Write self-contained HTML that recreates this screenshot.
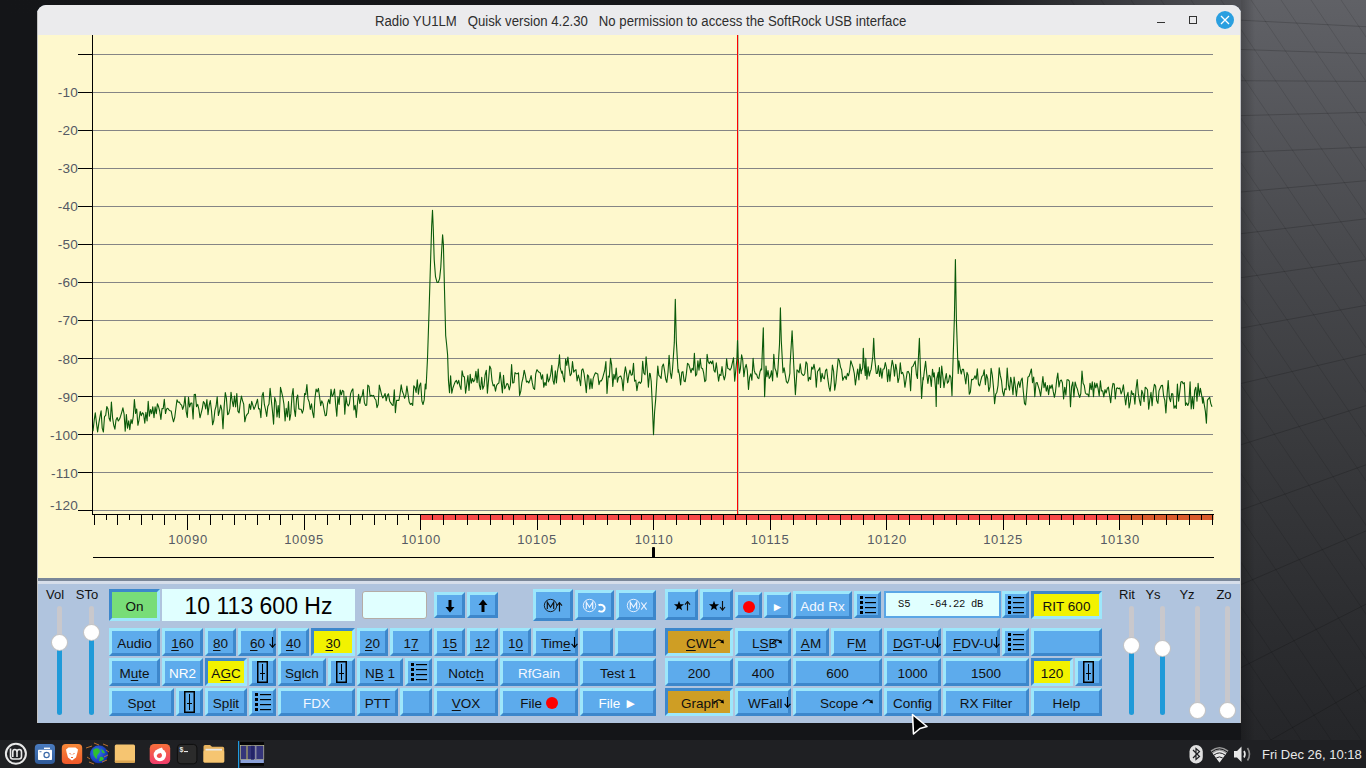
<!DOCTYPE html><html><head><meta charset="utf-8"><style>
*{margin:0;padding:0;box-sizing:content-box}
html,body{width:1366px;height:768px;overflow:hidden;background:#141518;font-family:"Liberation Sans",sans-serif}
.a{position:absolute}
.b{position:absolute;border-style:solid;text-align:center;white-space:nowrap;overflow:hidden}
.u{text-decoration:underline;text-underline-offset:2px;text-decoration-thickness:1px}
.yl{position:absolute;width:40px;text-align:right;font-size:13.6px;color:#555a64;line-height:14px;letter-spacing:0.2px}
.xl{position:absolute;width:60px;text-align:center;font-size:13px;color:#555a64;line-height:14px;letter-spacing:0.7px}
.sl{position:absolute;font-size:13px;color:#111;line-height:14px;text-align:center;width:30px}
</style></head><body>
<div class="a" style="left:0;top:0;width:1366px;height:16px;background:linear-gradient(90deg,#141518 0,#17181b 950px,#4a4b50 1200px,#5f6065 1366px)"></div><div class="a" style="left:1241px;top:0;width:125px;height:740px;background:linear-gradient(180deg,#606166 0%,#5c5d62 6%,#48494d 34%,#38393c 61%,#2c2d30 84%,#252629 100%)"></div><svg class="a" style="left:0;top:0" width="1366" height="740"><defs><clipPath id="dpc"><rect x="1241" y="0" width="125" height="740"/><rect x="1050" y="0" width="191" height="6"/></clipPath><linearGradient id="dsh" x1="0" y1="0" x2="1" y2="0"><stop offset="0" stop-color="#000" stop-opacity="0.22"/><stop offset="1" stop-color="#000" stop-opacity="0"/></linearGradient></defs><g clip-path="url(#dpc)"><line x1="1241" y1="20.2" x2="1366" y2="26.7" stroke="#000" stroke-opacity="0.17" stroke-width="1"/><line x1="1241" y1="49.5" x2="1366" y2="53.7" stroke="#000" stroke-opacity="0.17" stroke-width="1"/><line x1="1241" y1="80.7" x2="1366" y2="81.4" stroke="#000" stroke-opacity="0.17" stroke-width="1"/><line x1="1241" y1="115.6" x2="1366" y2="112.3" stroke="#000" stroke-opacity="0.17" stroke-width="1"/><line x1="1241" y1="152.3" x2="1366" y2="147.1" stroke="#000" stroke-opacity="0.17" stroke-width="1"/><line x1="1241" y1="192" x2="1366" y2="180.7" stroke="#000" stroke-opacity="0.17" stroke-width="1"/><line x1="1241" y1="233.7" x2="1366" y2="218.8" stroke="#000" stroke-opacity="0.17" stroke-width="1"/><line x1="1241" y1="277.7" x2="1366" y2="259.8" stroke="#000" stroke-opacity="0.17" stroke-width="1"/><line x1="1241" y1="328.1" x2="1366" y2="305.3" stroke="#000" stroke-opacity="0.17" stroke-width="1"/><line x1="1241" y1="383.5" x2="1366" y2="354.2" stroke="#000" stroke-opacity="0.17" stroke-width="1"/><line x1="1241" y1="444.7" x2="1366" y2="405.6" stroke="#000" stroke-opacity="0.17" stroke-width="1"/><line x1="1241" y1="510" x2="1366" y2="464.8" stroke="#000" stroke-opacity="0.17" stroke-width="1"/><line x1="1241" y1="584.6" x2="1366" y2="530.9" stroke="#000" stroke-opacity="0.17" stroke-width="1"/><line x1="1241" y1="667.6" x2="1366" y2="604.2" stroke="#000" stroke-opacity="0.17" stroke-width="1"/><line x1="1241" y1="757" x2="1366" y2="685.5" stroke="#000" stroke-opacity="0.17" stroke-width="1"/><line x1="1241" y1="850" x2="1366" y2="770" stroke="#000" stroke-opacity="0.17" stroke-width="1"/><line x1="351" y1="0" x2="851" y2="740" stroke="#000" stroke-opacity="0.11" stroke-width="1"/><line x1="381" y1="0" x2="881" y2="740" stroke="#000" stroke-opacity="0.11" stroke-width="1"/><line x1="411" y1="0" x2="911" y2="740" stroke="#000" stroke-opacity="0.11" stroke-width="1"/><line x1="441" y1="0" x2="941" y2="740" stroke="#000" stroke-opacity="0.11" stroke-width="1"/><line x1="471" y1="0" x2="971" y2="740" stroke="#000" stroke-opacity="0.11" stroke-width="1"/><line x1="501" y1="0" x2="1001" y2="740" stroke="#000" stroke-opacity="0.11" stroke-width="1"/><line x1="531" y1="0" x2="1031" y2="740" stroke="#000" stroke-opacity="0.11" stroke-width="1"/><line x1="561" y1="0" x2="1061" y2="740" stroke="#000" stroke-opacity="0.11" stroke-width="1"/><line x1="591" y1="0" x2="1091" y2="740" stroke="#000" stroke-opacity="0.11" stroke-width="1"/><line x1="621" y1="0" x2="1121" y2="740" stroke="#000" stroke-opacity="0.11" stroke-width="1"/><line x1="651" y1="0" x2="1151" y2="740" stroke="#000" stroke-opacity="0.11" stroke-width="1"/><line x1="681" y1="0" x2="1181" y2="740" stroke="#000" stroke-opacity="0.11" stroke-width="1"/><line x1="711" y1="0" x2="1211" y2="740" stroke="#000" stroke-opacity="0.11" stroke-width="1"/><line x1="741" y1="0" x2="1241" y2="740" stroke="#000" stroke-opacity="0.11" stroke-width="1"/><line x1="771" y1="0" x2="1271" y2="740" stroke="#000" stroke-opacity="0.11" stroke-width="1"/><line x1="801" y1="0" x2="1301" y2="740" stroke="#000" stroke-opacity="0.11" stroke-width="1"/><line x1="831" y1="0" x2="1331" y2="740" stroke="#000" stroke-opacity="0.11" stroke-width="1"/><line x1="861" y1="0" x2="1361" y2="740" stroke="#000" stroke-opacity="0.11" stroke-width="1"/><line x1="891" y1="0" x2="1391" y2="740" stroke="#000" stroke-opacity="0.11" stroke-width="1"/><line x1="921" y1="0" x2="1421" y2="740" stroke="#000" stroke-opacity="0.11" stroke-width="1"/><line x1="951" y1="0" x2="1451" y2="740" stroke="#000" stroke-opacity="0.11" stroke-width="1"/><line x1="981" y1="0" x2="1481" y2="740" stroke="#000" stroke-opacity="0.11" stroke-width="1"/><line x1="1011" y1="0" x2="1511" y2="740" stroke="#000" stroke-opacity="0.11" stroke-width="1"/><line x1="1041" y1="0" x2="1541" y2="740" stroke="#000" stroke-opacity="0.11" stroke-width="1"/><line x1="1071" y1="0" x2="1571" y2="740" stroke="#000" stroke-opacity="0.11" stroke-width="1"/><line x1="1101" y1="0" x2="1601" y2="740" stroke="#000" stroke-opacity="0.11" stroke-width="1"/><line x1="1131" y1="0" x2="1631" y2="740" stroke="#000" stroke-opacity="0.11" stroke-width="1"/><line x1="1161" y1="0" x2="1661" y2="740" stroke="#000" stroke-opacity="0.11" stroke-width="1"/><line x1="1191" y1="0" x2="1691" y2="740" stroke="#000" stroke-opacity="0.11" stroke-width="1"/><line x1="1221" y1="0" x2="1721" y2="740" stroke="#000" stroke-opacity="0.11" stroke-width="1"/><line x1="1251" y1="0" x2="1751" y2="740" stroke="#000" stroke-opacity="0.11" stroke-width="1"/><line x1="1281" y1="0" x2="1781" y2="740" stroke="#000" stroke-opacity="0.11" stroke-width="1"/><line x1="1311" y1="0" x2="1811" y2="740" stroke="#000" stroke-opacity="0.11" stroke-width="1"/><line x1="1341" y1="0" x2="1841" y2="740" stroke="#000" stroke-opacity="0.11" stroke-width="1"/><line x1="1371" y1="0" x2="1871" y2="740" stroke="#000" stroke-opacity="0.11" stroke-width="1"/><line x1="1401" y1="0" x2="1901" y2="740" stroke="#000" stroke-opacity="0.11" stroke-width="1"/></g><rect x="1241" y="0" width="14" height="740" fill="url(#dsh)"/></svg><div class="a" style="left:37px;top:5px;width:1204px;height:718px;background:#b0c4de;border-radius:9px 9px 0 0;overflow:hidden"><div class="a" style="left:0;top:0;width:1204px;height:30px;background:#ebebed"></div><div class="a" style="left:0;top:30px;width:1204px;height:543px;background:#fef8cd"></div><div class="a" style="left:0;top:573px;width:1204px;height:3px;background:#7a8798"></div><div class="a" style="left:0;top:576px;width:1204px;height:3px;background:#d6deea"></div></div><div class="a" style="left:37px;top:12px;width:1px;height:711px;background:#c4c4c4"></div><div class="a" style="left:1240px;top:12px;width:1px;height:711px;background:#c4c4c4"></div><div class="a" style="left:375px;top:13px;width:600px;font-size:14px;color:#2e2e2e;white-space:pre;line-height:16px;transform:scaleX(0.941);transform-origin:0 0">Radio YU1LM   Quisk version 4.2.30   No permission to access the SoftRock USB interface</div><div class="a" style="left:1157px;top:22px;width:8px;height:1px;background:#333"></div><div class="a" style="left:1189px;top:16px;width:6px;height:6px;border:1.5px solid #333"></div><div class="a" style="left:1216px;top:11px;width:18px;height:18px;border-radius:50%;background:#2a9fe0"></div><svg class="a" style="left:1216px;top:11px" width="18" height="18"><path d="M5 5L13 13M13 5L5 13" stroke="#fff" stroke-width="1.25"/></svg><svg class="a" style="left:0;top:0" width="1366" height="768"><line x1="93" y1="54.5" x2="1213" y2="54.5" stroke="#858585" stroke-width="1"/><line x1="78" y1="54.5" x2="93" y2="54.5" stroke="#000" stroke-width="1"/><line x1="93" y1="92.5" x2="1213" y2="92.5" stroke="#858585" stroke-width="1"/><line x1="78" y1="92.5" x2="93" y2="92.5" stroke="#000" stroke-width="1"/><line x1="93" y1="130.5" x2="1213" y2="130.5" stroke="#858585" stroke-width="1"/><line x1="78" y1="130.5" x2="93" y2="130.5" stroke="#000" stroke-width="1"/><line x1="93" y1="168.5" x2="1213" y2="168.5" stroke="#858585" stroke-width="1"/><line x1="78" y1="168.5" x2="93" y2="168.5" stroke="#000" stroke-width="1"/><line x1="93" y1="206.5" x2="1213" y2="206.5" stroke="#858585" stroke-width="1"/><line x1="78" y1="206.5" x2="93" y2="206.5" stroke="#000" stroke-width="1"/><line x1="93" y1="244.5" x2="1213" y2="244.5" stroke="#858585" stroke-width="1"/><line x1="78" y1="244.5" x2="93" y2="244.5" stroke="#000" stroke-width="1"/><line x1="93" y1="282.5" x2="1213" y2="282.5" stroke="#858585" stroke-width="1"/><line x1="78" y1="282.5" x2="93" y2="282.5" stroke="#000" stroke-width="1"/><line x1="93" y1="320.5" x2="1213" y2="320.5" stroke="#858585" stroke-width="1"/><line x1="78" y1="320.5" x2="93" y2="320.5" stroke="#000" stroke-width="1"/><line x1="93" y1="358.5" x2="1213" y2="358.5" stroke="#858585" stroke-width="1"/><line x1="78" y1="358.5" x2="93" y2="358.5" stroke="#000" stroke-width="1"/><line x1="93" y1="396.5" x2="1213" y2="396.5" stroke="#858585" stroke-width="1"/><line x1="78" y1="396.5" x2="93" y2="396.5" stroke="#000" stroke-width="1"/><line x1="93" y1="434.5" x2="1213" y2="434.5" stroke="#858585" stroke-width="1"/><line x1="78" y1="434.5" x2="93" y2="434.5" stroke="#000" stroke-width="1"/><line x1="93" y1="472.5" x2="1213" y2="472.5" stroke="#858585" stroke-width="1"/><line x1="78" y1="472.5" x2="93" y2="472.5" stroke="#000" stroke-width="1"/><line x1="93" y1="510.5" x2="1213" y2="510.5" stroke="#858585" stroke-width="1"/><line x1="78" y1="510.5" x2="93" y2="510.5" stroke="#000" stroke-width="1"/><line x1="92.5" y1="35" x2="92.5" y2="515" stroke="#000" stroke-width="1"/><rect x="420.6" y="515" width="699.0" height="5" fill="#f84848"/><rect x="1119.6" y="515" width="93.9" height="5" fill="#d85a2a"/><line x1="93" y1="514.5" x2="1214" y2="514.5" stroke="#000" stroke-width="1"/><line x1="94.5" y1="515" x2="94.5" y2="525" stroke="#000" stroke-width="1"/><line x1="106.5" y1="515" x2="106.5" y2="520" stroke="#000" stroke-width="1"/><line x1="117.5" y1="515" x2="117.5" y2="525" stroke="#000" stroke-width="1"/><line x1="129.5" y1="515" x2="129.5" y2="520" stroke="#000" stroke-width="1"/><line x1="141.5" y1="515" x2="141.5" y2="525" stroke="#000" stroke-width="1"/><line x1="152.5" y1="515" x2="152.5" y2="520" stroke="#000" stroke-width="1"/><line x1="164.5" y1="515" x2="164.5" y2="525" stroke="#000" stroke-width="1"/><line x1="175.5" y1="515" x2="175.5" y2="520" stroke="#000" stroke-width="1"/><line x1="187.5" y1="515" x2="187.5" y2="530" stroke="#000" stroke-width="1"/><line x1="199.5" y1="515" x2="199.5" y2="520" stroke="#000" stroke-width="1"/><line x1="210.5" y1="515" x2="210.5" y2="525" stroke="#000" stroke-width="1"/><line x1="222.5" y1="515" x2="222.5" y2="520" stroke="#000" stroke-width="1"/><line x1="234.5" y1="515" x2="234.5" y2="525" stroke="#000" stroke-width="1"/><line x1="245.5" y1="515" x2="245.5" y2="520" stroke="#000" stroke-width="1"/><line x1="257.5" y1="515" x2="257.5" y2="525" stroke="#000" stroke-width="1"/><line x1="269.5" y1="515" x2="269.5" y2="520" stroke="#000" stroke-width="1"/><line x1="280.5" y1="515" x2="280.5" y2="525" stroke="#000" stroke-width="1"/><line x1="292.5" y1="515" x2="292.5" y2="520" stroke="#000" stroke-width="1"/><line x1="304.5" y1="515" x2="304.5" y2="530" stroke="#000" stroke-width="1"/><line x1="315.5" y1="515" x2="315.5" y2="520" stroke="#000" stroke-width="1"/><line x1="327.5" y1="515" x2="327.5" y2="525" stroke="#000" stroke-width="1"/><line x1="339.5" y1="515" x2="339.5" y2="520" stroke="#000" stroke-width="1"/><line x1="350.5" y1="515" x2="350.5" y2="525" stroke="#000" stroke-width="1"/><line x1="362.5" y1="515" x2="362.5" y2="520" stroke="#000" stroke-width="1"/><line x1="374.5" y1="515" x2="374.5" y2="525" stroke="#000" stroke-width="1"/><line x1="385.5" y1="515" x2="385.5" y2="520" stroke="#000" stroke-width="1"/><line x1="397.5" y1="515" x2="397.5" y2="525" stroke="#000" stroke-width="1"/><line x1="408.5" y1="515" x2="408.5" y2="520" stroke="#000" stroke-width="1"/><line x1="420.5" y1="515" x2="420.5" y2="530" stroke="#000" stroke-width="1"/><line x1="432.5" y1="515" x2="432.5" y2="520" stroke="#000" stroke-width="1"/><line x1="443.5" y1="515" x2="443.5" y2="525" stroke="#000" stroke-width="1"/><line x1="455.5" y1="515" x2="455.5" y2="520" stroke="#000" stroke-width="1"/><line x1="467.5" y1="515" x2="467.5" y2="525" stroke="#000" stroke-width="1"/><line x1="478.5" y1="515" x2="478.5" y2="520" stroke="#000" stroke-width="1"/><line x1="490.5" y1="515" x2="490.5" y2="525" stroke="#000" stroke-width="1"/><line x1="502.5" y1="515" x2="502.5" y2="520" stroke="#000" stroke-width="1"/><line x1="513.5" y1="515" x2="513.5" y2="525" stroke="#000" stroke-width="1"/><line x1="525.5" y1="515" x2="525.5" y2="520" stroke="#000" stroke-width="1"/><line x1="537.5" y1="515" x2="537.5" y2="530" stroke="#000" stroke-width="1"/><line x1="548.5" y1="515" x2="548.5" y2="520" stroke="#000" stroke-width="1"/><line x1="560.5" y1="515" x2="560.5" y2="525" stroke="#000" stroke-width="1"/><line x1="572.5" y1="515" x2="572.5" y2="520" stroke="#000" stroke-width="1"/><line x1="583.5" y1="515" x2="583.5" y2="525" stroke="#000" stroke-width="1"/><line x1="595.5" y1="515" x2="595.5" y2="520" stroke="#000" stroke-width="1"/><line x1="607.5" y1="515" x2="607.5" y2="525" stroke="#000" stroke-width="1"/><line x1="618.5" y1="515" x2="618.5" y2="520" stroke="#000" stroke-width="1"/><line x1="630.5" y1="515" x2="630.5" y2="525" stroke="#000" stroke-width="1"/><line x1="641.5" y1="515" x2="641.5" y2="520" stroke="#000" stroke-width="1"/><line x1="653.5" y1="515" x2="653.5" y2="530" stroke="#000" stroke-width="1"/><line x1="665.5" y1="515" x2="665.5" y2="520" stroke="#000" stroke-width="1"/><line x1="676.5" y1="515" x2="676.5" y2="525" stroke="#000" stroke-width="1"/><line x1="688.5" y1="515" x2="688.5" y2="520" stroke="#000" stroke-width="1"/><line x1="700.5" y1="515" x2="700.5" y2="525" stroke="#000" stroke-width="1"/><line x1="711.5" y1="515" x2="711.5" y2="520" stroke="#000" stroke-width="1"/><line x1="723.5" y1="515" x2="723.5" y2="525" stroke="#000" stroke-width="1"/><line x1="735.5" y1="515" x2="735.5" y2="520" stroke="#000" stroke-width="1"/><line x1="746.5" y1="515" x2="746.5" y2="525" stroke="#000" stroke-width="1"/><line x1="758.5" y1="515" x2="758.5" y2="520" stroke="#000" stroke-width="1"/><line x1="770.5" y1="515" x2="770.5" y2="530" stroke="#000" stroke-width="1"/><line x1="781.5" y1="515" x2="781.5" y2="520" stroke="#000" stroke-width="1"/><line x1="793.5" y1="515" x2="793.5" y2="525" stroke="#000" stroke-width="1"/><line x1="805.5" y1="515" x2="805.5" y2="520" stroke="#000" stroke-width="1"/><line x1="816.5" y1="515" x2="816.5" y2="525" stroke="#000" stroke-width="1"/><line x1="828.5" y1="515" x2="828.5" y2="520" stroke="#000" stroke-width="1"/><line x1="840.5" y1="515" x2="840.5" y2="525" stroke="#000" stroke-width="1"/><line x1="851.5" y1="515" x2="851.5" y2="520" stroke="#000" stroke-width="1"/><line x1="863.5" y1="515" x2="863.5" y2="525" stroke="#000" stroke-width="1"/><line x1="874.5" y1="515" x2="874.5" y2="520" stroke="#000" stroke-width="1"/><line x1="886.5" y1="515" x2="886.5" y2="530" stroke="#000" stroke-width="1"/><line x1="898.5" y1="515" x2="898.5" y2="520" stroke="#000" stroke-width="1"/><line x1="909.5" y1="515" x2="909.5" y2="525" stroke="#000" stroke-width="1"/><line x1="921.5" y1="515" x2="921.5" y2="520" stroke="#000" stroke-width="1"/><line x1="933.5" y1="515" x2="933.5" y2="525" stroke="#000" stroke-width="1"/><line x1="944.5" y1="515" x2="944.5" y2="520" stroke="#000" stroke-width="1"/><line x1="956.5" y1="515" x2="956.5" y2="525" stroke="#000" stroke-width="1"/><line x1="968.5" y1="515" x2="968.5" y2="520" stroke="#000" stroke-width="1"/><line x1="979.5" y1="515" x2="979.5" y2="525" stroke="#000" stroke-width="1"/><line x1="991.5" y1="515" x2="991.5" y2="520" stroke="#000" stroke-width="1"/><line x1="1003.5" y1="515" x2="1003.5" y2="530" stroke="#000" stroke-width="1"/><line x1="1014.5" y1="515" x2="1014.5" y2="520" stroke="#000" stroke-width="1"/><line x1="1026.5" y1="515" x2="1026.5" y2="525" stroke="#000" stroke-width="1"/><line x1="1038.5" y1="515" x2="1038.5" y2="520" stroke="#000" stroke-width="1"/><line x1="1049.5" y1="515" x2="1049.5" y2="525" stroke="#000" stroke-width="1"/><line x1="1061.5" y1="515" x2="1061.5" y2="520" stroke="#000" stroke-width="1"/><line x1="1073.5" y1="515" x2="1073.5" y2="525" stroke="#000" stroke-width="1"/><line x1="1084.5" y1="515" x2="1084.5" y2="520" stroke="#000" stroke-width="1"/><line x1="1096.5" y1="515" x2="1096.5" y2="525" stroke="#000" stroke-width="1"/><line x1="1107.5" y1="515" x2="1107.5" y2="520" stroke="#000" stroke-width="1"/><line x1="1119.5" y1="515" x2="1119.5" y2="530" stroke="#000" stroke-width="1"/><line x1="1131.5" y1="515" x2="1131.5" y2="520" stroke="#000" stroke-width="1"/><line x1="1142.5" y1="515" x2="1142.5" y2="525" stroke="#000" stroke-width="1"/><line x1="1154.5" y1="515" x2="1154.5" y2="520" stroke="#000" stroke-width="1"/><line x1="1166.5" y1="515" x2="1166.5" y2="525" stroke="#000" stroke-width="1"/><line x1="1177.5" y1="515" x2="1177.5" y2="520" stroke="#000" stroke-width="1"/><line x1="1189.5" y1="515" x2="1189.5" y2="525" stroke="#000" stroke-width="1"/><line x1="1201.5" y1="515" x2="1201.5" y2="520" stroke="#000" stroke-width="1"/><line x1="1212.5" y1="515" x2="1212.5" y2="525" stroke="#000" stroke-width="1"/><line x1="93" y1="557.5" x2="1214" y2="557.5" stroke="#000" stroke-width="1"/><rect x="652" y="547" width="3" height="11" rx="1" fill="#000"/><rect x="738" y="35" width="1" height="479" fill="#c6ccae"/><rect x="737" y="35" width="1" height="479" fill="#ff0000"/><polyline points="93.0,431.1 94.2,420.1 95.3,412.9 96.5,423.4 97.6,431.9 98.8,423.4 99.9,417.2 101.1,410.9 102.2,428.1 103.4,432.0 104.5,416.7 105.7,415.4 106.8,406.6 108.0,409.1 109.1,418.2 110.3,421.3 111.4,402.1 112.6,417.9 113.7,425.0 114.9,429.1 116.0,420.0 117.2,417.6 118.3,421.0 119.5,419.3 120.6,416.2 121.8,412.1 122.9,407.9 124.1,414.1 125.2,431.2 126.4,414.6 127.5,428.1 128.7,420.8 129.8,429.6 131.0,419.5 132.1,423.6 133.3,416.3 134.4,399.5 135.6,413.4 136.7,409.0 137.9,425.3 139.0,420.2 140.2,411.5 141.3,415.6 142.5,412.7 143.6,414.1 144.8,423.2 145.9,412.3 147.1,421.0 148.2,401.2 149.4,416.2 150.5,409.5 151.7,413.6 152.8,406.7 154.0,417.6 155.1,406.9 156.3,413.6 157.4,403.8 158.6,406.8 159.7,411.2 160.9,419.4 162.0,408.6 163.2,408.7 164.3,399.3 165.5,413.5 166.6,408.9 167.8,408.3 168.9,409.9 170.1,410.7 171.2,411.1 172.4,417.3 173.5,421.8 174.7,417.7 175.8,409.0 177.0,399.8 178.1,402.2 179.3,402.0 180.4,404.1 181.6,405.1 182.7,409.4 183.9,405.5 185.0,396.6 186.2,411.6 187.3,417.4 188.5,397.4 189.6,407.0 190.8,403.1 191.9,403.0 193.1,419.0 194.2,394.5 195.4,394.4 196.5,406.6 197.7,404.4 198.8,408.9 200.0,417.8 201.1,413.4 202.3,408.5 203.4,401.6 204.6,403.4 205.7,408.9 206.9,399.6 208.0,414.6 209.2,405.1 210.3,400.6 211.5,410.8 212.6,424.8 213.8,420.5 214.9,410.4 216.1,406.0 217.2,396.9 218.4,415.5 219.5,411.1 220.7,405.0 221.8,410.1 223.0,428.8 224.1,407.1 225.3,392.5 226.4,398.1 227.6,414.6 228.7,413.7 229.9,408.5 231.0,392.2 232.2,400.9 233.3,406.6 234.5,396.1 235.6,407.0 236.8,393.6 237.9,411.1 239.1,412.9 240.2,403.6 241.4,396.0 242.5,400.6 243.7,404.2 244.8,421.8 246.0,416.3 247.1,414.4 248.3,413.2 249.4,404.0 250.6,409.4 251.7,401.4 252.9,405.4 254.0,409.4 255.2,406.5 256.3,403.3 257.5,399.2 258.6,408.9 259.8,408.8 260.9,417.7 262.1,395.7 263.2,392.4 264.4,404.7 265.5,409.5 266.7,416.4 267.8,406.4 269.0,404.1 270.1,388.3 271.3,399.9 272.4,410.4 273.6,424.1 274.7,397.5 275.9,401.9 277.0,417.0 278.2,405.6 279.3,417.6 280.5,387.3 281.6,391.9 282.8,397.1 283.9,404.0 285.1,421.0 286.2,408.2 287.4,417.0 288.5,401.5 289.7,420.1 290.8,413.9 292.0,395.6 293.1,388.5 294.3,409.5 295.4,416.4 296.6,398.5 297.7,395.0 298.8,408.9 300.0,409.2 301.1,409.2 302.3,413.1 303.4,409.7 304.6,393.5 305.7,394.6 306.9,384.6 308.0,398.9 309.2,402.0 310.3,409.4 311.5,403.9 312.6,412.3 313.8,417.6 314.9,398.8 316.1,389.1 317.2,391.9 318.4,388.4 319.5,396.3 320.7,405.6 321.8,400.9 323.0,403.6 324.1,410.0 325.3,415.8 326.4,415.3 327.6,403.3 328.7,399.6 329.9,403.8 331.0,389.4 332.2,396.4 333.3,394.5 334.5,389.0 335.6,404.1 336.8,416.3 337.9,396.9 339.1,404.5 340.2,390.0 341.4,394.8 342.5,390.3 343.7,391.3 344.8,414.2 346.0,396.3 347.1,403.8 348.3,405.9 349.4,403.7 350.6,393.6 351.7,390.6 352.9,388.9 354.0,409.9 355.2,405.4 356.3,417.4 357.5,402.9 358.6,394.4 359.8,403.5 360.9,397.2 362.1,396.0 363.2,389.5 364.4,402.7 365.5,405.4 366.7,405.3 367.8,385.1 369.0,386.3 370.1,396.2 371.3,395.3 372.4,396.0 373.6,395.4 374.7,398.5 375.9,400.0 377.0,407.6 378.2,404.2 379.3,385.1 380.5,390.2 381.6,394.9 382.8,398.0 383.9,396.3 385.1,393.5 386.2,400.8 387.4,395.4 388.5,393.8 389.7,401.2 390.8,402.9 392.0,404.8 393.1,405.5 394.3,389.9 395.4,412.6 396.6,400.3 397.7,400.4 398.9,400.4 400.0,394.5 401.2,384.9 402.3,391.3 403.5,394.1 404.6,398.3 405.8,395.1 406.9,386.0 408.1,394.5 409.2,402.1 410.4,404.4 411.5,403.4 412.7,405.4 413.8,385.7 415.0,387.6 416.1,392.5 417.3,379.8 418.4,394.1 419.6,385.5 420.7,383.1 421.9,401.1 423.0,404.5 424.2,399.9 425.3,384.0 426.0,389.0 427.5,358.5 429.0,312.9 430.5,263.4 431.7,225.4 432.5,210.2 433.3,229.2 434.2,259.6 435.5,276.7 437.0,282.4 438.3,282.4 439.6,278.6 440.8,267.2 441.8,248.2 442.6,234.9 443.4,244.4 444.5,290.0 445.7,335.7 446.7,345.2 447.6,354.7 448.5,381.3 449.5,392.8 450.6,375.7 451.8,393.2 452.9,388.0 454.1,384.6 455.2,381.8 456.4,380.4 457.5,383.9 458.7,380.3 459.8,385.8 461.0,389.4 462.1,370.8 463.3,376.4 464.4,376.8 465.6,393.2 466.7,385.0 467.9,375.5 469.0,390.5 470.2,374.4 471.3,383.1 472.5,378.5 473.6,381.8 474.8,379.7 475.9,371.4 477.1,382.6 478.2,369.1 479.4,385.1 480.5,389.5 481.7,377.3 482.8,389.1 484.0,385.8 485.1,375.0 486.3,370.4 487.4,393.3 488.6,379.7 489.7,366.0 490.9,368.7 492.0,380.7 493.2,386.0 494.3,384.6 495.5,391.2 496.6,385.4 497.8,383.7 498.9,383.0 500.1,372.2 501.2,381.4 502.4,393.0 503.5,375.3 504.7,388.7 505.8,386.4 507.0,383.4 508.1,384.5 509.3,390.0 510.4,385.1 511.6,364.6 512.7,382.9 513.9,382.7 515.0,372.6 516.2,373.7 517.3,373.7 518.5,372.9 519.6,395.4 520.8,391.1 521.9,382.3 523.1,377.5 524.2,370.2 525.4,375.4 526.5,382.1 527.7,381.2 528.8,383.0 530.0,379.7 531.1,375.6 532.3,382.9 533.4,388.2 534.6,389.5 535.7,374.2 536.9,369.7 538.0,371.1 539.2,372.4 540.3,372.8 541.5,379.1 542.6,374.7 543.8,387.2 544.9,382.5 546.1,385.5 547.2,374.1 548.4,381.9 549.5,379.3 550.7,374.4 551.8,365.4 553.0,380.4 554.1,384.3 555.3,370.7 556.4,383.0 557.3,372.6 558.8,363.5 559.5,354.7 560.2,367.6 561.7,373.2 562.2,371.1 563.3,377.4 564.5,381.9 565.6,359.0 566.8,365.4 567.9,357.1 569.1,367.6 570.2,375.8 571.4,373.8 572.5,361.5 573.7,372.1 574.8,370.5 576.0,369.7 577.1,381.0 578.3,375.0 579.4,378.9 580.6,385.7 581.7,370.2 582.9,368.8 584.0,373.3 585.2,382.1 586.3,392.6 587.5,374.9 588.6,376.1 589.8,389.0 590.9,378.7 592.1,388.4 593.2,378.4 594.4,375.1 595.5,372.8 596.7,373.5 597.8,374.1 599.0,384.7 600.1,380.8 601.3,381.0 602.4,378.8 603.6,374.3 604.7,370.5 605.9,361.6 607.0,393.4 608.2,376.0 609.3,377.2 610.5,358.4 611.6,364.6 612.8,386.5 613.9,374.4 615.1,379.3 616.2,368.1 617.4,382.2 618.5,377.4 619.7,376.6 620.8,376.1 622.0,379.9 623.1,390.6 624.3,374.4 625.4,366.8 626.6,373.7 627.7,382.7 628.9,374.7 630.0,370.1 631.2,375.1 632.3,374.8 633.5,363.3 634.6,381.1 635.8,380.2 636.9,390.7 638.1,383.1 639.2,381.9 640.4,383.4 641.5,381.5 642.7,361.2 643.8,373.0 645.0,374.7 646.1,356.8 647.3,370.9 648.4,387.1 649.6,373.2 650.2,373.7 651.2,381.3 652.3,404.2 653.5,434.6 654.6,411.8 655.6,400.4 656.8,381.3 657.8,366.1 658.8,375.3 659.9,376.4 661.1,378.5 662.2,366.4 663.4,364.0 664.5,370.4 665.7,379.3 666.8,382.4 668.0,372.2 669.1,355.2 670.3,372.4 671.4,378.4 672.5,369.5 674.3,342.9 675.3,299.2 676.3,340.8 678.1,372.1 678.3,369.4 679.5,375.1 680.6,385.0 681.8,372.3 682.9,371.6 684.1,381.0 685.2,381.7 686.4,373.4 687.5,363.3 688.7,364.3 689.8,367.8 691.0,372.6 692.1,368.4 693.3,370.1 694.4,353.2 695.6,375.9 696.7,374.2 697.9,360.8 699.0,370.3 700.2,358.6 701.3,368.0 702.5,368.4 703.6,372.7 704.8,381.6 705.9,380.1 707.1,354.4 708.2,361.8 709.4,363.6 710.5,361.2 711.7,363.8 712.8,360.7 714.0,370.4 715.1,372.1 716.3,362.7 717.4,371.6 718.6,381.2 719.7,374.3 720.9,375.5 722.0,366.5 723.2,375.4 724.3,379.9 725.5,375.0 726.6,358.9 727.8,368.5 728.9,368.8 730.1,370.1 731.2,368.1 732.4,362.6 733.5,357.8 734.7,381.2 735.5,373.4 736.9,358.8 737.5,340.6 738.1,356.8 739.5,373.1 740.4,368.6 741.6,354.8 742.7,359.8 743.9,376.8 745.0,368.1 746.2,364.4 747.3,370.5 748.5,389.4 749.6,377.3 750.8,373.7 751.9,380.3 753.1,358.2 754.2,370.4 755.4,374.0 756.5,374.0 757.7,377.9 758.8,378.6 760.0,371.8 761.1,368.7 761.6,369.9 763.3,327.7 764.6,396.6 766.0,366.1 766.9,376.8 768.0,370.6 769.2,378.4 770.3,376.8 771.5,370.7 772.6,380.9 773.8,354.2 774.9,368.2 776.1,371.3 777.2,377.3 777.8,371.3 779.5,344.3 780.4,307.9 781.3,340.8 783.0,372.7 784.1,367.8 785.3,374.9 786.4,381.7 787.6,383.1 788.7,380.1 789.9,373.2 790.0,366.1 792.1,330.8 793.8,366.1 795.4,394.7 797.0,369.9 797.9,370.7 799.1,372.7 800.2,363.7 801.4,372.9 802.5,374.7 803.7,375.4 804.8,373.4 806.0,361.9 807.1,363.7 808.3,381.0 809.4,377.3 810.6,379.4 811.7,367.0 812.9,369.2 814.0,364.4 815.2,371.0 816.3,387.1 817.5,371.5 818.6,370.2 819.8,367.7 820.9,381.6 822.1,373.4 823.2,377.9 824.4,378.8 825.5,370.7 826.7,369.1 827.8,378.7 829.0,387.2 830.1,391.3 831.3,380.7 832.4,365.0 833.6,371.3 834.7,390.1 835.9,382.8 837.0,371.1 838.2,358.7 839.3,360.3 840.5,367.1 841.6,369.8 842.8,380.4 843.9,377.6 845.1,376.2 846.2,379.4 847.4,373.4 848.5,375.8 849.7,370.5 850.8,360.7 852.0,364.3 853.1,367.6 854.3,373.5 855.4,384.9 856.6,376.0 857.7,369.0 858.9,380.0 860.0,364.1 861.2,373.6 861.3,371.6 862.7,367.7 863.3,348.2 863.9,360.4 865.3,375.4 865.8,358.3 866.9,379.1 868.1,366.7 869.2,376.0 870.4,371.2 871.1,369.4 872.8,356.4 873.7,338.4 874.6,357.8 876.3,373.5 877.3,373.5 878.4,365.5 879.6,376.5 880.7,368.0 881.9,378.2 883.0,369.2 884.2,368.8 885.3,362.5 886.5,368.0 887.6,381.6 888.8,369.5 889.9,381.2 891.1,368.7 892.2,360.2 893.4,365.8 894.5,376.1 895.7,364.2 896.8,370.0 898.0,382.5 899.1,377.9 900.3,362.8 901.4,373.6 902.6,372.3 903.7,375.8 904.9,387.3 906.0,380.2 907.2,371.8 908.3,371.4 909.5,374.3 910.6,390.6 911.8,367.1 912.9,366.4 914.1,363.8 915.2,361.1 916.4,374.5 917.5,378.5 917.6,373.7 919.4,338.4 920.6,373.7 921.6,398.5 923.0,377.5 923.3,380.0 924.4,370.4 925.6,361.2 926.7,373.5 927.9,383.5 929.0,375.2 930.2,376.2 931.3,386.5 932.5,369.2 933.6,377.0 934.2,372.8 935.7,390.1 936.2,406.5 936.7,378.7 938.2,372.3 938.2,383.9 939.4,367.6 940.5,387.5 941.7,366.1 942.8,376.0 944.0,387.7 945.1,379.6 946.3,373.6 947.4,383.2 948.6,381.4 949.7,375.1 950.9,377.5 952.0,395.6 952.6,375.3 954.4,317.5 955.4,259.6 956.4,320.5 958.2,373.5 958.9,360.9 960.1,368.4 961.2,374.0 962.4,369.2 963.5,369.4 964.7,376.5 965.8,383.9 967.0,372.4 968.1,375.1 969.3,394.3 970.4,392.0 971.6,379.2 972.7,379.7 973.9,378.6 975.0,375.7 976.2,379.3 977.3,368.7 978.5,384.1 979.6,385.9 980.8,380.6 981.9,376.4 983.1,375.4 984.2,369.8 985.4,384.6 986.5,374.6 987.7,378.4 988.8,391.4 990.0,386.9 991.1,368.3 992.3,375.0 993.4,386.4 994.6,403.6 995.7,394.3 996.9,392.2 998.0,385.6 999.2,367.7 1000.3,375.4 1001.5,380.5 1002.6,391.5 1003.8,395.8 1004.9,388.8 1006.1,389.6 1007.2,368.0 1008.4,385.0 1009.5,390.1 1010.7,377.2 1011.8,383.1 1013.0,394.8 1014.1,377.0 1015.3,386.2 1016.4,396.3 1017.6,385.1 1018.7,381.6 1019.9,387.5 1021.0,380.5 1022.2,378.1 1023.3,391.3 1024.5,403.4 1025.6,404.9 1026.8,390.7 1027.9,377.1 1029.1,376.2 1030.2,373.0 1031.4,369.0 1032.5,382.6 1033.7,377.1 1034.8,396.6 1036.0,382.9 1037.1,382.5 1038.3,386.4 1039.4,390.0 1040.6,396.1 1041.7,387.3 1042.9,376.5 1044.0,387.6 1045.2,382.6 1046.3,391.2 1047.5,385.6 1048.6,394.6 1049.8,385.4 1050.9,388.4 1052.1,384.7 1053.2,391.4 1054.4,397.3 1055.5,391.8 1056.7,379.8 1057.8,373.1 1059.0,387.0 1060.1,380.9 1061.3,380.0 1062.4,382.8 1063.6,398.9 1064.7,387.2 1065.9,395.2 1067.0,379.7 1068.2,379.8 1069.3,381.2 1070.5,406.7 1071.6,386.6 1072.8,382.0 1073.9,396.9 1075.1,382.0 1076.2,386.2 1077.4,389.1 1078.5,394.0 1079.7,397.4 1080.8,393.5 1082.0,371.1 1083.1,383.2 1084.3,385.6 1085.4,393.0 1086.6,394.3 1087.7,394.0 1088.9,396.7 1090.0,383.2 1091.2,389.7 1092.3,381.9 1093.5,396.6 1094.6,382.9 1095.8,387.8 1096.9,383.3 1098.1,388.6 1099.2,396.0 1100.4,380.8 1101.5,391.0 1102.7,390.9 1103.8,396.9 1105.0,389.6 1106.1,393.0 1107.3,388.4 1108.4,387.2 1109.6,395.3 1110.7,402.8 1111.9,389.8 1113.0,383.4 1114.2,384.0 1115.3,399.0 1116.5,388.2 1117.6,387.9 1118.8,388.8 1119.9,388.0 1121.1,393.9 1122.2,391.0 1123.4,384.8 1124.5,395.2 1125.7,404.9 1126.8,396.3 1128.0,392.3 1129.1,407.9 1130.3,401.9 1131.4,390.7 1132.6,394.5 1133.7,393.5 1134.9,404.2 1136.0,389.2 1137.2,379.5 1138.3,393.4 1139.5,400.5 1140.6,405.5 1141.8,390.3 1142.9,393.6 1144.1,401.6 1145.2,387.3 1146.4,388.2 1147.5,389.8 1148.7,409.1 1149.8,399.9 1151.0,392.3 1152.1,405.6 1153.3,391.1 1154.4,384.3 1155.6,386.1 1156.7,400.6 1157.9,403.4 1159.0,390.9 1160.2,388.0 1161.3,385.6 1162.5,385.4 1163.6,395.8 1164.8,400.4 1165.9,412.9 1167.1,394.4 1168.2,380.5 1169.4,398.0 1170.5,401.7 1171.7,393.5 1172.8,394.1 1174.0,408.2 1175.1,405.8 1176.3,408.5 1177.4,384.1 1178.6,401.2 1179.7,392.1 1180.9,381.9 1182.0,381.4 1183.2,383.8 1184.3,382.7 1185.5,405.4 1186.6,402.9 1187.8,405.5 1188.9,402.6 1190.1,381.9 1191.2,409.0 1192.4,396.7 1193.5,408.6 1194.7,390.4 1195.8,387.2 1197.0,401.1 1198.1,383.3 1199.3,395.7 1200.4,388.4 1201.6,395.0 1202.7,403.3 1203.1,397.4 1205.4,411.6 1206.4,423.2 1207.4,400.2 1209.7,397.3 1210.8,403.6 1212.0,406.7" fill="none" stroke="#0a5a0a" stroke-width="1.1" stroke-linejoin="round"/></svg><div class="yl" style="left:38px;top:86px">-10</div><div class="yl" style="left:38px;top:124px">-20</div><div class="yl" style="left:38px;top:162px">-30</div><div class="yl" style="left:38px;top:200px">-40</div><div class="yl" style="left:38px;top:238px">-50</div><div class="yl" style="left:38px;top:276px">-60</div><div class="yl" style="left:38px;top:314px">-70</div><div class="yl" style="left:38px;top:353px">-80</div><div class="yl" style="left:38px;top:391px">-90</div><div class="yl" style="left:38px;top:429px">-100</div><div class="yl" style="left:38px;top:467px">-110</div><div class="yl" style="left:38px;top:499px">-120</div><div class="xl" style="left:158px;top:533px">10090</div><div class="xl" style="left:274px;top:533px">10095</div><div class="xl" style="left:391px;top:533px">10100</div><div class="xl" style="left:507px;top:533px">10105</div><div class="xl" style="left:624px;top:533px">10110</div><div class="xl" style="left:740px;top:533px">10115</div><div class="xl" style="left:857px;top:533px">10120</div><div class="xl" style="left:973px;top:533px">10125</div><div class="xl" style="left:1090px;top:533px">10130</div><div class="sl" style="left:40px;top:588px">Vol</div><div class="sl" style="left:72px;top:588px">STo</div><div class="sl" style="left:1112px;top:588px">Rit</div><div class="sl" style="left:1138px;top:588px">Ys</div><div class="sl" style="left:1172px;top:588px">Yz</div><div class="sl" style="left:1209px;top:588px">Zo</div><div class="a" style="left:57.0px;top:606px;width:5px;height:109px;border-radius:2.5px;background:#c9c8cc"></div><div class="a" style="left:57.0px;top:642px;width:5px;height:73px;border-radius:2.5px;background:#1f9ad9"></div><div class="a" style="left:50.9px;top:633.9px;width:15px;height:15px;border-radius:50%;background:#fff;border:0.6px solid rgba(90,90,90,0.35)"></div><div class="a" style="left:89.0px;top:606px;width:5px;height:109px;border-radius:2.5px;background:#c9c8cc"></div><div class="a" style="left:89.0px;top:632px;width:5px;height:83px;border-radius:2.5px;background:#1f9ad9"></div><div class="a" style="left:82.9px;top:623.8px;width:15px;height:15px;border-radius:50%;background:#fff;border:0.6px solid rgba(90,90,90,0.35)"></div><div class="a" style="left:1129.0px;top:606px;width:5px;height:109px;border-radius:2.5px;background:#c9c8cc"></div><div class="a" style="left:1129.0px;top:645px;width:5px;height:70px;border-radius:2.5px;background:#1f9ad9"></div><div class="a" style="left:1122.9px;top:636.9px;width:15px;height:15px;border-radius:50%;background:#fff;border:0.6px solid rgba(90,90,90,0.35)"></div><div class="a" style="left:1159.8px;top:606px;width:5px;height:109px;border-radius:2.5px;background:#c9c8cc"></div><div class="a" style="left:1159.8px;top:648px;width:5px;height:67px;border-radius:2.5px;background:#1f9ad9"></div><div class="a" style="left:1153.7px;top:639.8px;width:15px;height:15px;border-radius:50%;background:#fff;border:0.6px solid rgba(90,90,90,0.35)"></div><div class="a" style="left:1194.8px;top:606px;width:5px;height:109px;border-radius:2.5px;background:#c9c8cc"></div><div class="a" style="left:1194.8px;top:710px;width:5px;height:5px;border-radius:2.5px;background:#1f9ad9"></div><div class="a" style="left:1188.7px;top:701.9px;width:15px;height:15px;border-radius:50%;background:#fff;border:0.6px solid rgba(90,90,90,0.35)"></div><div class="a" style="left:1225.0px;top:606px;width:5px;height:109px;border-radius:2.5px;background:#c9c8cc"></div><div class="a" style="left:1225.0px;top:710px;width:5px;height:5px;border-radius:2.5px;background:#1f9ad9"></div><div class="a" style="left:1218.9px;top:701.9px;width:15px;height:15px;border-radius:50%;background:#fff;border:0.6px solid rgba(90,90,90,0.35)"></div><div class="b" style="left:109px;top:589px;width:45px;height:26px;border-width:3px;border-color:#3d87cb #9de7fb #9de7fb #3d87cb;background:#78dd78;color:#101010;font-size:13.5px;line-height:30px;">On</div><div class="a" style="left:162px;top:589px;width:193px;height:32px;background:#e0ffff;color:#000;font-size:23px;line-height:35px;text-align:center">10 113 600 Hz</div><div class="a" style="left:362px;top:591px;width:63px;height:26px;background:#e0ffff;border:1px solid #b4aca6;border-radius:3px"></div><div class="b" style="left:434px;top:592px;width:25px;height:20px;border-width:3px;border-color:#9de7fb #3d87cb #3d87cb #9de7fb;background:#5dabec;display:flex;align-items:center;justify-content:center;"><svg width="10" height="13" viewBox="0 0 10 13" style="margin-top:2px"><path d="M3.5 0H6.5V7H9.5L5 12.5L0.5 7H3.5Z" fill="#000"/></svg></div><div class="b" style="left:467px;top:592px;width:25px;height:20px;border-width:3px;border-color:#9de7fb #3d87cb #3d87cb #9de7fb;background:#5dabec;display:flex;align-items:center;justify-content:center;"><svg width="10" height="13" viewBox="0 0 10 13" style="margin-top:0px"><path d="M3.5 13H6.5V6H9.5L5 0.5L0.5 6H3.5Z" fill="#000"/></svg></div><div class="b" style="left:533px;top:589px;width:34px;height:26px;border-width:3px;border-color:#9de7fb #3d87cb #3d87cb #9de7fb;background:#5dabec;color:#101010;font-size:13.5px;line-height:30px;"></div><svg class="a" style="left:542.6px;top:597.9px" width="15" height="15"><circle cx="7.5" cy="7.5" r="6.2" fill="none" stroke="#111" stroke-width="0.9"/><path d="M4.3 10.9V4.3L7.5 9.2L10.7 4.3V10.9" fill="none" stroke="#111" stroke-width="1.15" stroke-linejoin="miter"/></svg><svg class="a" style="left:556.4px;top:601.8px" width="7" height="10"><path d="M3.5 9.5V0.8M1 3.6L3.5 0.6L6 3.6" fill="none" stroke="#111" stroke-width="1.15"/></svg><div class="b" style="left:575px;top:590px;width:33px;height:24px;border-width:3px;border-color:#9de7fb #3d87cb #3d87cb #9de7fb;background:#5dabec;color:#101010;font-size:13.5px;line-height:28px;"></div><svg class="a" style="left:582.1px;top:597.9px" width="15" height="15"><circle cx="7.5" cy="7.5" r="6.2" fill="none" stroke="#eef4ff" stroke-width="0.9"/><path d="M4.3 10.9V4.3L7.5 9.2L10.7 4.3V10.9" fill="none" stroke="#eef4ff" stroke-width="1.15" stroke-linejoin="miter"/></svg><svg class="a" style="left:597px;top:603px" width="10" height="10"><path d="M1.5 2.2Q3.5 1.2 5.5 2.2Q8 3.6 7.6 6Q7 8.6 4.2 8.6Q2.6 8.6 1.5 7.8" fill="none" stroke="#fff" stroke-width="1.9"/></svg><div class="b" style="left:616px;top:590px;width:34px;height:24px;border-width:3px;border-color:#9de7fb #3d87cb #3d87cb #9de7fb;background:#5dabec;color:#101010;font-size:13.5px;line-height:28px;"></div><svg class="a" style="left:626.3px;top:597.9px" width="15" height="15"><circle cx="7.5" cy="7.5" r="6.2" fill="none" stroke="#eef4ff" stroke-width="0.9"/><path d="M4.3 10.9V4.3L7.5 9.2L10.7 4.3V10.9" fill="none" stroke="#eef4ff" stroke-width="1.15" stroke-linejoin="miter"/></svg><svg class="a" style="left:640px;top:601px" width="8" height="10"><path d="M1.2 1.5L6.6 8.6M6.6 1.5L1.2 8.6" fill="none" stroke="#eef4ff" stroke-width="1.1"/></svg><div class="b" style="left:665px;top:589px;width:27px;height:25px;border-width:3px;border-color:#9de7fb #3d87cb #3d87cb #9de7fb;background:#5dabec;color:#101010;font-size:13.5px;line-height:29px;"></div><svg class="a" style="left:672.6px;top:599.8px" width="12" height="12"><polygon points="6.00,0.70 7.29,4.22 11.04,4.36 8.09,6.68 9.12,10.29 6.00,8.20 2.88,10.29 3.91,6.68 0.96,4.36 4.71,4.22" fill="#000"/></svg><svg class="a" style="left:684.3px;top:600.8px" width="7" height="10"><path d="M3.5 9.5V0.8M1 3.6L3.5 0.6L6 3.6" fill="none" stroke="#111" stroke-width="1.15"/></svg><div class="b" style="left:700px;top:589px;width:27px;height:25px;border-width:3px;border-color:#9de7fb #3d87cb #3d87cb #9de7fb;background:#5dabec;color:#101010;font-size:13.5px;line-height:29px;"></div><svg class="a" style="left:707.7px;top:599.8px" width="12" height="12"><polygon points="6.00,0.70 7.29,4.22 11.04,4.36 8.09,6.68 9.12,10.29 6.00,8.20 2.88,10.29 3.91,6.68 0.96,4.36 4.71,4.22" fill="#000"/></svg><svg class="a" style="left:719.0px;top:600.8px" width="7" height="10"><path d="M3.5 0V8.9M1 6L3.5 9.2L6 6" fill="none" stroke="#111" stroke-width="1.15"/></svg><div class="b" style="left:735px;top:592px;width:21px;height:20px;border-width:3px;border-color:#9de7fb #3d87cb #3d87cb #9de7fb;background:#5dabec;color:#101010;font-size:13.5px;line-height:24px;"><span style="display:inline-block;width:12px;height:12px;border-radius:50%;background:#f00;vertical-align:middle"></span></div><div class="b" style="left:764px;top:592px;width:21px;height:20px;border-width:3px;border-color:#9de7fb #3d87cb #3d87cb #9de7fb;background:#5dabec;color:#fff;font-size:12px;line-height:24px;">&#9658;</div><div class="b" style="left:793px;top:591px;width:53px;height:22px;border-width:3px;border-color:#9de7fb #3d87cb #3d87cb #9de7fb;background:#5dabec;color:#f4f8ff;font-size:13.5px;line-height:26px;">Add Rx</div><div class="b" style="left:854px;top:591px;width:21px;height:21px;border-width:3px;border-color:#9de7fb #3d87cb #3d87cb #9de7fb;background:#5dabec;display:flex;align-items:center;justify-content:center;"><svg width="16" height="18" viewBox="0 0 16 18"><rect x="0" y="0" width="3" height="3"/><rect x="0" y="5" width="3" height="3"/><rect x="0" y="10" width="3" height="3"/><rect x="0" y="15" width="3" height="3"/><rect x="5" y="1" width="11" height="1.2"/><rect x="5" y="6" width="11" height="1.2"/><rect x="5" y="11" width="11" height="1.2"/><rect x="5" y="16" width="11" height="1.2"/></svg></div><div class="a" style="left:884px;top:591px;width:113px;height:23px;background:#e0ffff;border:2px solid #5aa6e6"></div><div class="a" style="left:898px;top:598px;font-family:'Liberation Mono',monospace;font-size:10.5px;line-height:12px;color:#111;white-space:pre">S5</div><div class="a" style="left:929px;top:598px;font-family:'Liberation Mono',monospace;font-size:10.5px;line-height:12px;color:#111;white-space:pre;letter-spacing:-0.3px">-64.22 dB</div><div class="b" style="left:1002px;top:591px;width:21px;height:21px;border-width:3px;border-color:#9de7fb #3d87cb #3d87cb #9de7fb;background:#5dabec;display:flex;align-items:center;justify-content:center;"><svg width="16" height="18" viewBox="0 0 16 18"><rect x="0" y="0" width="3" height="3"/><rect x="0" y="5" width="3" height="3"/><rect x="0" y="10" width="3" height="3"/><rect x="0" y="15" width="3" height="3"/><rect x="5" y="1" width="11" height="1.2"/><rect x="5" y="6" width="11" height="1.2"/><rect x="5" y="11" width="11" height="1.2"/><rect x="5" y="16" width="11" height="1.2"/></svg></div><div class="b" style="left:1031px;top:591px;width:65px;height:22px;border-width:3px;border-color:#3d87cb #9de7fb #9de7fb #3d87cb;background:#f2f200;color:#101010;font-size:13.5px;line-height:26px;">RIT 600</div><div class="b" style="left:109px;top:628px;width:45px;height:22px;border-width:3px;border-color:#9de7fb #3d87cb #3d87cb #9de7fb;background:#5dabec;color:#101010;font-size:13.5px;line-height:26px;">Audio</div><div class="b" style="left:162px;top:628px;width:35px;height:22px;border-width:3px;border-color:#9de7fb #3d87cb #3d87cb #9de7fb;background:#5dabec;color:#101010;font-size:13.5px;line-height:26px;"><span class="u">1</span>60</div><div class="b" style="left:205px;top:628px;width:25px;height:22px;border-width:3px;border-color:#9de7fb #3d87cb #3d87cb #9de7fb;background:#5dabec;color:#101010;font-size:13.5px;line-height:26px;"><span class="u">8</span>0</div><div class="b" style="left:238px;top:628px;width:32px;height:22px;border-width:3px;border-color:#9de7fb #3d87cb #3d87cb #9de7fb;background:#5dabec;color:#101010;font-size:13.5px;line-height:26px;"></div><div class="a" style="left:250px;top:631px;height:22px;line-height:26px;font-size:13.5px;color:#101010;white-space:nowrap"><span class="u">6</span>0</div><svg class="a" style="left:269px;top:637px" width="7" height="11"><path d="M3.5 0V10M0.6 6.8L3.5 10.3L6.4 6.8" fill="none" stroke="#000" stroke-width="1.1"/></svg><div class="b" style="left:278px;top:628px;width:25px;height:22px;border-width:3px;border-color:#9de7fb #3d87cb #3d87cb #9de7fb;background:#5dabec;color:#101010;font-size:13.5px;line-height:26px;"><span class="u">4</span>0</div><div class="b" style="left:311px;top:628px;width:38px;height:22px;border-width:3px;border-color:#3d87cb #9de7fb #9de7fb #3d87cb;background:#f2f200;color:#101010;font-size:13.5px;line-height:26px;"><span class="u">3</span>0</div><div class="b" style="left:357px;top:628px;width:25px;height:22px;border-width:3px;border-color:#9de7fb #3d87cb #3d87cb #9de7fb;background:#5dabec;color:#101010;font-size:13.5px;line-height:26px;"><span class="u">2</span>0</div><div class="b" style="left:390px;top:628px;width:36px;height:22px;border-width:3px;border-color:#9de7fb #3d87cb #3d87cb #9de7fb;background:#5dabec;color:#101010;font-size:13.5px;line-height:26px;">1<span class="u">7</span></div><div class="b" style="left:434px;top:628px;width:25px;height:22px;border-width:3px;border-color:#9de7fb #3d87cb #3d87cb #9de7fb;background:#5dabec;color:#101010;font-size:13.5px;line-height:26px;">1<span class="u">5</span></div><div class="b" style="left:467px;top:628px;width:25px;height:22px;border-width:3px;border-color:#9de7fb #3d87cb #3d87cb #9de7fb;background:#5dabec;color:#101010;font-size:13.5px;line-height:26px;"><span class="u">1</span>2</div><div class="b" style="left:500px;top:628px;width:25px;height:22px;border-width:3px;border-color:#9de7fb #3d87cb #3d87cb #9de7fb;background:#5dabec;color:#101010;font-size:13.5px;line-height:26px;">1<span class="u">0</span></div><div class="b" style="left:533px;top:628px;width:39px;height:22px;border-width:3px;border-color:#9de7fb #3d87cb #3d87cb #9de7fb;background:#5dabec;color:#101010;font-size:13.5px;line-height:26px;"></div><div class="a" style="left:541px;top:631px;height:22px;line-height:26px;font-size:13.5px;color:#101010;white-space:nowrap">Tim<span class="u">e</span></div><svg class="a" style="left:571px;top:637px" width="7" height="11"><path d="M3.5 0V10M0.6 6.8L3.5 10.3L6.4 6.8" fill="none" stroke="#000" stroke-width="1.1"/></svg><div class="b" style="left:580px;top:628px;width:27px;height:22px;border-width:3px;border-color:#9de7fb #3d87cb #3d87cb #9de7fb;background:#5dabec;color:#101010;font-size:13.5px;line-height:26px;"></div><div class="b" style="left:615px;top:628px;width:35px;height:22px;border-width:3px;border-color:#9de7fb #3d87cb #3d87cb #9de7fb;background:#5dabec;color:#101010;font-size:13.5px;line-height:26px;"></div><div class="b" style="left:665px;top:628px;width:62px;height:22px;border-width:3px;border-color:#3d87cb #9de7fb #9de7fb #3d87cb;background:#cf9e24;color:#101010;font-size:13.5px;line-height:26px;"></div><div class="a" style="left:686px;top:631px;height:22px;line-height:26px;font-size:13.5px;color:#101010;white-space:nowrap"><span class="u">C</span>WL</div><svg class="a" style="left:713px;top:637px" width="12" height="8"><path d="M0.8 7Q4.5 0.2 9.6 4.6" fill="none" stroke="#000" stroke-width="1.1"/><path d="M7.2 5.6L11 6.4L10.3 2.6Z" fill="#000"/></svg><div class="b" style="left:735px;top:628px;width:50px;height:22px;border-width:3px;border-color:#9de7fb #3d87cb #3d87cb #9de7fb;background:#5dabec;color:#101010;font-size:13.5px;line-height:26px;"></div><div class="a" style="left:752px;top:631px;height:22px;line-height:26px;font-size:13.5px;color:#101010;white-space:nowrap">L<span class="u">S</span>B</div><svg class="a" style="left:771px;top:637px" width="12" height="8"><path d="M0.8 7Q4.5 0.2 9.6 4.6" fill="none" stroke="#000" stroke-width="1.1"/><path d="M7.2 5.6L11 6.4L10.3 2.6Z" fill="#000"/></svg><div class="b" style="left:793px;top:628px;width:30px;height:22px;border-width:3px;border-color:#9de7fb #3d87cb #3d87cb #9de7fb;background:#5dabec;color:#101010;font-size:13.5px;line-height:26px;"><span class="u">A</span>M</div><div class="b" style="left:831px;top:628px;width:45px;height:22px;border-width:3px;border-color:#9de7fb #3d87cb #3d87cb #9de7fb;background:#5dabec;color:#101010;font-size:13.5px;line-height:26px;">F<span class="u">M</span></div><div class="b" style="left:884px;top:628px;width:51px;height:22px;border-width:3px;border-color:#9de7fb #3d87cb #3d87cb #9de7fb;background:#5dabec;color:#101010;font-size:13.5px;line-height:26px;"></div><div class="a" style="left:893px;top:631px;height:22px;line-height:26px;font-size:13.5px;color:#101010;white-space:nowrap"><span class="u">D</span>GT-U</div><svg class="a" style="left:934px;top:637px" width="7" height="11"><path d="M3.5 0V10M0.6 6.8L3.5 10.3L6.4 6.8" fill="none" stroke="#000" stroke-width="1.1"/></svg><div class="b" style="left:943px;top:628px;width:51px;height:22px;border-width:3px;border-color:#9de7fb #3d87cb #3d87cb #9de7fb;background:#5dabec;color:#101010;font-size:13.5px;line-height:26px;"></div><div class="a" style="left:953px;top:631px;height:22px;line-height:26px;font-size:13.5px;color:#101010;white-space:nowrap"><span class="u">F</span>DV-U</div><svg class="a" style="left:993px;top:637px" width="7" height="11"><path d="M3.5 0V10M0.6 6.8L3.5 10.3L6.4 6.8" fill="none" stroke="#000" stroke-width="1.1"/></svg><div class="b" style="left:1002px;top:628px;width:21px;height:22px;border-width:3px;border-color:#9de7fb #3d87cb #3d87cb #9de7fb;background:#5dabec;display:flex;align-items:center;justify-content:center;"><svg width="16" height="18" viewBox="0 0 16 18"><rect x="0" y="0" width="3" height="3"/><rect x="0" y="5" width="3" height="3"/><rect x="0" y="10" width="3" height="3"/><rect x="0" y="15" width="3" height="3"/><rect x="5" y="1" width="11" height="1.2"/><rect x="5" y="6" width="11" height="1.2"/><rect x="5" y="11" width="11" height="1.2"/><rect x="5" y="16" width="11" height="1.2"/></svg></div><div class="b" style="left:1031px;top:628px;width:65px;height:22px;border-width:3px;border-color:#9de7fb #3d87cb #3d87cb #9de7fb;background:#5dabec;color:#101010;font-size:13.5px;line-height:26px;"></div><div class="b" style="left:109px;top:658px;width:45px;height:22px;border-width:3px;border-color:#9de7fb #3d87cb #3d87cb #9de7fb;background:#5dabec;color:#101010;font-size:13.5px;line-height:26px;">M<span class="u">u</span>te</div><div class="b" style="left:162px;top:658px;width:35px;height:22px;border-width:3px;border-color:#9de7fb #3d87cb #3d87cb #9de7fb;background:#5dabec;color:#fff;font-size:13.5px;line-height:26px;">NR2</div><div class="b" style="left:205px;top:658px;width:36px;height:22px;border-width:3px;border-color:#3d87cb #9de7fb #9de7fb #3d87cb;background:#f2f200;color:#101010;font-size:13.5px;line-height:26px;">A<span class="u">G</span>C</div><div class="b" style="left:249px;top:658px;width:21px;height:22px;border-width:3px;border-color:#9de7fb #3d87cb #3d87cb #9de7fb;background:#5dabec;display:flex;align-items:center;justify-content:center;"><svg width="11" height="22" viewBox="0 0 11 22"><rect x="0.75" y="0.75" width="9.5" height="20.5" fill="none" stroke="#000" stroke-width="1.5"/><rect x="5" y="3" width="1" height="16" fill="#000"/><rect x="3" y="12" width="5" height="1" fill="#000"/></svg></div><div class="b" style="left:278px;top:658px;width:42px;height:22px;border-width:3px;border-color:#9de7fb #3d87cb #3d87cb #9de7fb;background:#5dabec;color:#101010;font-size:13.5px;line-height:26px;">S<span class="u">q</span>lch</div><div class="b" style="left:328px;top:658px;width:21px;height:22px;border-width:3px;border-color:#9de7fb #3d87cb #3d87cb #9de7fb;background:#5dabec;display:flex;align-items:center;justify-content:center;"><svg width="11" height="22" viewBox="0 0 11 22"><rect x="0.75" y="0.75" width="9.5" height="20.5" fill="none" stroke="#000" stroke-width="1.5"/><rect x="5" y="3" width="1" height="16" fill="#000"/><rect x="3" y="12" width="5" height="1" fill="#000"/></svg></div><div class="b" style="left:357px;top:658px;width:40px;height:22px;border-width:3px;border-color:#9de7fb #3d87cb #3d87cb #9de7fb;background:#5dabec;color:#101010;font-size:13.5px;line-height:26px;">N<span class="u">B</span> 1</div><div class="b" style="left:405px;top:658px;width:21px;height:22px;border-width:3px;border-color:#9de7fb #3d87cb #3d87cb #9de7fb;background:#5dabec;display:flex;align-items:center;justify-content:center;"><svg width="16" height="18" viewBox="0 0 16 18"><rect x="0" y="0" width="3" height="3"/><rect x="0" y="5" width="3" height="3"/><rect x="0" y="10" width="3" height="3"/><rect x="0" y="15" width="3" height="3"/><rect x="5" y="1" width="11" height="1.2"/><rect x="5" y="6" width="11" height="1.2"/><rect x="5" y="11" width="11" height="1.2"/><rect x="5" y="16" width="11" height="1.2"/></svg></div><div class="b" style="left:434px;top:658px;width:58px;height:22px;border-width:3px;border-color:#9de7fb #3d87cb #3d87cb #9de7fb;background:#5dabec;color:#101010;font-size:13.5px;line-height:26px;">Notc<span class="u">h</span></div><div class="b" style="left:500px;top:658px;width:72px;height:22px;border-width:3px;border-color:#9de7fb #3d87cb #3d87cb #9de7fb;background:#5dabec;color:#f4f8ff;font-size:13.5px;line-height:26px;">RfGain</div><div class="b" style="left:580px;top:658px;width:70px;height:22px;border-width:3px;border-color:#9de7fb #3d87cb #3d87cb #9de7fb;background:#5dabec;color:#101010;font-size:13.5px;line-height:26px;">Test 1</div><div class="b" style="left:665px;top:658px;width:62px;height:22px;border-width:3px;border-color:#9de7fb #3d87cb #3d87cb #9de7fb;background:#5dabec;color:#101010;font-size:13.5px;line-height:26px;">200</div><div class="b" style="left:735px;top:658px;width:50px;height:22px;border-width:3px;border-color:#9de7fb #3d87cb #3d87cb #9de7fb;background:#5dabec;color:#101010;font-size:13.5px;line-height:26px;">400</div><div class="b" style="left:793px;top:658px;width:83px;height:22px;border-width:3px;border-color:#9de7fb #3d87cb #3d87cb #9de7fb;background:#5dabec;color:#101010;font-size:13.5px;line-height:26px;">600</div><div class="b" style="left:884px;top:658px;width:51px;height:22px;border-width:3px;border-color:#9de7fb #3d87cb #3d87cb #9de7fb;background:#5dabec;color:#101010;font-size:13.5px;line-height:26px;">1000</div><div class="b" style="left:943px;top:658px;width:80px;height:22px;border-width:3px;border-color:#9de7fb #3d87cb #3d87cb #9de7fb;background:#5dabec;color:#101010;font-size:13.5px;line-height:26px;">1500</div><div class="b" style="left:1031px;top:658px;width:36px;height:22px;border-width:3px;border-color:#3d87cb #9de7fb #9de7fb #3d87cb;background:#f2f200;color:#101010;font-size:13.5px;line-height:26px;">120</div><div class="b" style="left:1075px;top:658px;width:21px;height:22px;border-width:3px;border-color:#9de7fb #3d87cb #3d87cb #9de7fb;background:#5dabec;display:flex;align-items:center;justify-content:center;"><svg width="11" height="22" viewBox="0 0 11 22"><rect x="0.75" y="0.75" width="9.5" height="20.5" fill="none" stroke="#000" stroke-width="1.5"/><rect x="5" y="3" width="1" height="16" fill="#000"/><rect x="3" y="12" width="5" height="1" fill="#000"/></svg></div><div class="b" style="left:109px;top:688px;width:59px;height:22px;border-width:3px;border-color:#9de7fb #3d87cb #3d87cb #9de7fb;background:#5dabec;color:#101010;font-size:13.5px;line-height:26px;">Sp<span class="u">o</span>t</div><div class="b" style="left:176px;top:688px;width:21px;height:22px;border-width:3px;border-color:#9de7fb #3d87cb #3d87cb #9de7fb;background:#5dabec;display:flex;align-items:center;justify-content:center;"><svg width="11" height="22" viewBox="0 0 11 22"><rect x="0.75" y="0.75" width="9.5" height="20.5" fill="none" stroke="#000" stroke-width="1.5"/><rect x="5" y="3" width="1" height="16" fill="#000"/><rect x="3" y="12" width="5" height="1" fill="#000"/></svg></div><div class="b" style="left:205px;top:688px;width:36px;height:22px;border-width:3px;border-color:#9de7fb #3d87cb #3d87cb #9de7fb;background:#5dabec;color:#101010;font-size:13.5px;line-height:26px;">Sp<span class="u">l</span>it</div><div class="b" style="left:249px;top:688px;width:21px;height:22px;border-width:3px;border-color:#9de7fb #3d87cb #3d87cb #9de7fb;background:#5dabec;display:flex;align-items:center;justify-content:center;"><svg width="16" height="18" viewBox="0 0 16 18"><rect x="0" y="0" width="3" height="3"/><rect x="0" y="5" width="3" height="3"/><rect x="0" y="10" width="3" height="3"/><rect x="0" y="15" width="3" height="3"/><rect x="5" y="1" width="11" height="1.2"/><rect x="5" y="6" width="11" height="1.2"/><rect x="5" y="11" width="11" height="1.2"/><rect x="5" y="16" width="11" height="1.2"/></svg></div><div class="b" style="left:278px;top:688px;width:71px;height:22px;border-width:3px;border-color:#9de7fb #3d87cb #3d87cb #9de7fb;background:#5dabec;color:#f4f8ff;font-size:13.5px;line-height:26px;">FDX</div><div class="b" style="left:357px;top:688px;width:35px;height:22px;border-width:3px;border-color:#9de7fb #3d87cb #3d87cb #9de7fb;background:#5dabec;color:#101010;font-size:13.5px;line-height:26px;">PTT</div><div class="b" style="left:400px;top:688px;width:26px;height:22px;border-width:3px;border-color:#9de7fb #3d87cb #3d87cb #9de7fb;background:#5dabec;color:#101010;font-size:13.5px;line-height:26px;"></div><div class="b" style="left:434px;top:688px;width:58px;height:22px;border-width:3px;border-color:#9de7fb #3d87cb #3d87cb #9de7fb;background:#5dabec;color:#101010;font-size:13.5px;line-height:26px;"><span class="u">V</span>OX</div><div class="b" style="left:500px;top:688px;width:72px;height:22px;border-width:3px;border-color:#9de7fb #3d87cb #3d87cb #9de7fb;background:#5dabec;color:#101010;font-size:13.5px;line-height:26px;">File <span style="display:inline-block;width:12px;height:12px;border-radius:50%;background:#f00;vertical-align:-1px"></span></div><div class="b" style="left:580px;top:688px;width:70px;height:22px;border-width:3px;border-color:#9de7fb #3d87cb #3d87cb #9de7fb;background:#5dabec;color:#fff;font-size:13.5px;line-height:26px;">File &#9658;</div><div class="b" style="left:665px;top:688px;width:62px;height:22px;border-width:3px;border-color:#3d87cb #9de7fb #9de7fb #3d87cb;background:#cf9e24;color:#101010;font-size:13.5px;line-height:26px;"></div><div class="a" style="left:681px;top:691px;height:22px;line-height:26px;font-size:13.5px;color:#101010;white-space:nowrap">Graph</div><svg class="a" style="left:713px;top:697px" width="12" height="8"><path d="M0.8 7Q4.5 0.2 9.6 4.6" fill="none" stroke="#000" stroke-width="1.1"/><path d="M7.2 5.6L11 6.4L10.3 2.6Z" fill="#000"/></svg><div class="b" style="left:735px;top:688px;width:50px;height:22px;border-width:3px;border-color:#9de7fb #3d87cb #3d87cb #9de7fb;background:#5dabec;color:#101010;font-size:13.5px;line-height:26px;"></div><div class="a" style="left:748px;top:691px;height:22px;line-height:26px;font-size:13.5px;color:#101010;white-space:nowrap">WFall</div><svg class="a" style="left:784px;top:697px" width="7" height="11"><path d="M3.5 0V10M0.6 6.8L3.5 10.3L6.4 6.8" fill="none" stroke="#000" stroke-width="1.1"/></svg><div class="b" style="left:793px;top:688px;width:83px;height:22px;border-width:3px;border-color:#9de7fb #3d87cb #3d87cb #9de7fb;background:#5dabec;color:#101010;font-size:13.5px;line-height:26px;"></div><div class="a" style="left:820px;top:691px;height:22px;line-height:26px;font-size:13.5px;color:#101010;white-space:nowrap">Scope</div><svg class="a" style="left:862px;top:697px" width="12" height="8"><path d="M0.8 7Q4.5 0.2 9.6 4.6" fill="none" stroke="#000" stroke-width="1.1"/><path d="M7.2 5.6L11 6.4L10.3 2.6Z" fill="#000"/></svg><div class="b" style="left:884px;top:688px;width:51px;height:22px;border-width:3px;border-color:#9de7fb #3d87cb #3d87cb #9de7fb;background:#5dabec;color:#101010;font-size:13.5px;line-height:26px;">Config</div><div class="b" style="left:943px;top:688px;width:80px;height:22px;border-width:3px;border-color:#9de7fb #3d87cb #3d87cb #9de7fb;background:#5dabec;color:#101010;font-size:13.5px;line-height:26px;">RX Filter</div><div class="b" style="left:1031px;top:688px;width:65px;height:22px;border-width:3px;border-color:#9de7fb #3d87cb #3d87cb #9de7fb;background:#5dabec;color:#101010;font-size:13.5px;line-height:26px;">Help</div><div class="a" style="left:0;top:740px;width:1366px;height:28px;background:#1f2023"></div><svg class="a" style="left:0;top:0" width="1366" height="768"><circle cx="15.9" cy="753.8" r="10" fill="none" stroke="#e8e8e8" stroke-width="2"/><path d="M10.5 748.5V756.5Q10.5 759 13 759H19Q21.5 759 21.5 756.5V752Q21.5 749.5 19.3 749.5Q17 749.5 17 752V757M17 752Q17 749.5 14.8 749.5Q12.8 749.5 12.8 752V757" fill="none" stroke="#e8e8e8" stroke-width="1.6"/><defs><linearGradient id="gcam" x1="0" y1="0" x2="0" y2="1"><stop offset="0" stop-color="#4a7cc0"/><stop offset="1" stop-color="#2f5a98"/></linearGradient><linearGradient id="gbr" x1="0" y1="0" x2="0" y2="1"><stop offset="0" stop-color="#f78a3a"/><stop offset="1" stop-color="#f0582a"/></linearGradient><linearGradient id="gff" x1="0" y1="0" x2="0" y2="1"><stop offset="0" stop-color="#f8703a"/><stop offset="1" stop-color="#f03c6c"/></linearGradient><radialGradient id="gglobe" cx="0.4" cy="0.4" r="0.6"><stop offset="0" stop-color="#3a7af0"/><stop offset="1" stop-color="#1030b0"/></radialGradient></defs><rect x="34.8" y="744" width="20.2" height="20" rx="4" fill="url(#gcam)"/><rect x="38" y="749.7" width="14" height="10.3" rx="0.8" fill="#fff"/><rect x="44" y="747.6" width="6" height="1.4" fill="#fff"/><circle cx="46.6" cy="755" r="2.6" fill="none" stroke="#3a68a8" stroke-width="1.2"/><rect x="39.5" y="751.3" width="2" height="0.9" fill="#3a68a8"/><rect x="61.8" y="744" width="20.4" height="20" rx="4" fill="url(#gbr)"/><path d="M66 749.5L68.5 747.5H75.5L78 749.5L77.5 752L76 757.5L72 760.5L68 757.5L66.5 752Z" fill="#fff"/><path d="M69.5 753L71 754.5M74.5 753L73 754.5M71 757.5H73" stroke="#f0652e" stroke-width="1"/><circle cx="98.9" cy="754.3" r="9" fill="url(#gglobe)"/><path d="M93 750Q96 747 99 749Q101 752 98 754Q96 756 97 759Q95 758 93.5 755Z M101 749Q104 750 105 753Q103 754 102 752Z M100 757Q103 756 104 759Q101 762 99 761Z" fill="#2ec02e"/><path d="M86 748L92 746M94 743L99 745M103 744L108 746M106 750L109 752M87 757L90 759M89 762L94 764M102 762L107 760M104 757L108 755" stroke="#c87830" stroke-width="0.9"/><rect x="114.8" y="744.6" width="20.2" height="18.2" rx="1.5" fill="#f6c571"/><rect x="114.8" y="760.6" width="20.2" height="2.2" rx="0.8" fill="#dca652"/><rect x="149.7" y="744" width="20.5" height="20" rx="4.5" fill="url(#gff)"/><circle cx="159.9" cy="755" r="6.2" fill="#fff"/><circle cx="159.3" cy="755.3" r="2.6" fill="#f05050"/><path d="M158 749L162 747.5L163 750Z" fill="#fff"/><path d="M156 755.5Q157 752.5 160 752.5" stroke="#fff" stroke-width="1.5" fill="none"/><rect x="177.4" y="744.4" width="19.5" height="19.4" rx="3.5" fill="#2b2b2b" stroke="#0e0e0e" stroke-width="1"/><text x="179.5" y="752" font-family="Liberation Sans" font-size="7" fill="#e8e8e8" font-weight="bold">$</text><rect x="184" y="751" width="4" height="1.1" fill="#e8e8e8"/><path d="M203.5 746.5Q203.5 744.9 205 744.9H210L212 746.8H222.7Q224.2 746.8 224.2 748.3V761Q224.2 762.5 222.7 762.5H205Q203.5 762.5 203.5 761Z" fill="#e6b25e"/><rect x="205.5" y="748.8" width="16.5" height="2.5" fill="#e8e8e8"/><rect x="203.5" y="750.5" width="20.7" height="12" rx="1.2" fill="#f6c571"/><rect x="238" y="741" width="1.2" height="27" fill="#1e9ae0"/><rect x="240" y="742" width="24" height="23.8" fill="#050505"/><rect x="240.5" y="745.6" width="23.3" height="17.4" fill="#3a3c78"/><rect x="240.5" y="745.6" width="23.3" height="14" fill="#35357a" stroke="#d8d8a0" stroke-width="0.6"/><rect x="246.5" y="745.8" width="1" height="14" fill="#c8c060"/><rect x="251" y="745.8" width="3" height="14" fill="#242468"/><rect x="255" y="745.8" width="1.5" height="14" fill="#8888a0"/><rect x="240.5" y="759.8" width="23.3" height="3.2" fill="#8aa0d8"/><rect x="1189.5" y="745" width="13.3" height="18.5" rx="6.6" fill="#e0e0e0"/><path d="M1193 750L1199.5 756.5L1196 759.5V748.5L1199.5 751.5L1193 758" fill="none" stroke="#1f2023" stroke-width="1.2"/><path d="M1210.5 750.5Q1219.5 743.5 1228.5 750.5L1219.5 762.5Z" fill="#9a9a9a"/><path d="M1212.8 753.5Q1219.5 748 1226.2 753.5L1219.5 762.5Z" fill="#e8e8e8"/><path d="M1211.7 752Q1219.5 745.8 1227.3 752" fill="none" stroke="#1f2023" stroke-width="1"/><path d="M1214 755Q1219.5 750.8 1225 755" fill="none" stroke="#1f2023" stroke-width="1"/><path d="M1216.3 758Q1219.5 755.8 1222.7 758" fill="none" stroke="#1f2023" stroke-width="1"/><path d="M1234 751H1237L1241.5 746.5V762L1237 757.5H1234Z" fill="#e8e8e8"/><path d="M1244 751Q1246 754.3 1244 757.5" fill="none" stroke="#e8e8e8" stroke-width="1.6"/><path d="M1247.5 748Q1251.5 754.3 1247.5 760.5" fill="none" stroke="#8a8a8a" stroke-width="1.6"/></svg><div class="a" style="left:1262px;top:747px;font-size:13px;line-height:16px;color:#e8e8e8;white-space:nowrap">Fri Dec 26, 10:18</div><svg class="a" style="left:908px;top:711px" width="26" height="28"><path d="M4.5 3.5 L19 15.5 L12 17.5 L5.5 23 Z" fill="#000" stroke="#fff" stroke-width="1.6" stroke-linejoin="round"/></svg></body></html>
